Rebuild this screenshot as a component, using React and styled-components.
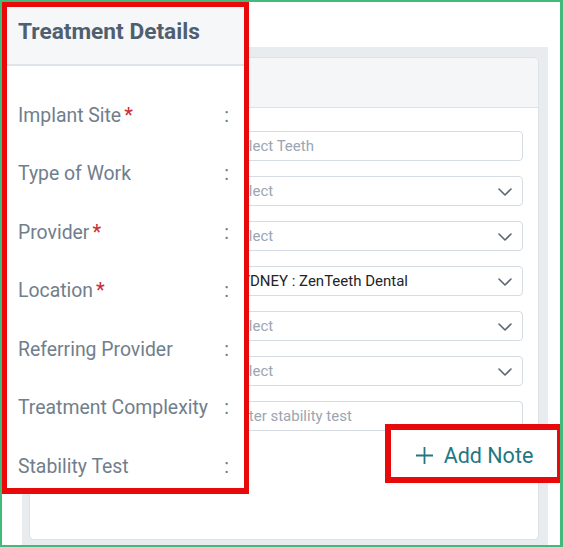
import React from 'react';
import styled, { createGlobalStyle } from 'styled-components';

const Global = createGlobalStyle`
  body {
    margin: 0;
    font-family: Roboto, "Liberation Sans", sans-serif;
    background: #fff;
  }
  * { box-sizing: border-box; }
`;

const Frame = styled.div`
  position: relative;
  width: 563px;
  height: 547px;
  border: 2px solid #44b97c;
  border-right-width: 3px;
  background: #fff;
  overflow: hidden;
  padding: 45px 12px 0 20px;
`;

const Shell = styled.div`
  height: 100%;
  background: #e9ecef;
  padding: 10px 9px 5px 7px;
  display: flex;
  flex-direction: column;
`;

const Card = styled.div`
  flex: 1;
  display: flex;
  flex-direction: column;
  background: #fff;
  border: 1px solid #dde2e7;
  border-radius: 5px;
  overflow: hidden;
`;

const CardHead = styled.div`
  height: 50px;
  background: #f5f6f8;
  border-bottom: 1px solid #dde2e7;
`;

const CardBody = styled.div`
  padding: 23px 15px 0 0;
  display: grid;
  grid-template-columns: 189px 1fr;
  row-gap: 15px;
`;

const Field = styled.div`
  grid-column: 2;
  position: relative;
  height: 30px;
  border: 1px solid #d6dce3;
  border-radius: 4px;
  display: flex;
  align-items: center;
  padding: 0 12px;
  font-size: 15px;
  color: ${p => (p.$placeholder ? '#9ba6b2' : '#212529')};
  white-space: nowrap;
`;

const Chevron = styled.svg`
  position: absolute;
  right: 10px;
  top: 11px;
`;

/* enlarged label panel laid over the form */
const ZoomPanel = styled.div`
  position: absolute;
  left: 0;
  top: 0;
  width: 247px;
  height: 492px;
  border: 5px solid #e80a0a;
  border-bottom-width: 6px;
  background: #fff;
`;

const PanelHead = styled.div`
  height: 59px;
  background: #f5f7f9;
  border-bottom: 2px solid #dfe4ea;
  padding: 11px 0 0 11px;
  font-size: 22.7px;
  line-height: 27px;
  font-weight: 700;
  color: #505f70;
`;

const PanelBody = styled.div`
  padding: 20px 15px 0 11px;
`;

const LabelRow = styled.div`
  height: 58.5px;
  display: flex;
  align-items: center;
  justify-content: space-between;
  font-size: 19.4px;
  color: #717e8c;
`;

const Req = styled.span`
  color: #c8343a;
  font-weight: 500;
  margin-left: 3px;
`;

const NoteBox = styled.div`
  position: absolute;
  left: 383px;
  top: 422px;
  width: 178px;
  height: 59px;
  border: 6px solid #e80a0a;
  background: #fff;
  display: flex;
  align-items: center;
  justify-content: center;
  gap: 10px;
  padding-top: 4px;
  font-size: 21.5px;
  color: #237782;
`;

const fields = [
  { key: 'site', value: 'Select Teeth', placeholder: true, select: false },
  { key: 'work', value: 'Select', placeholder: true, select: true },
  { key: 'provider', value: 'Select', placeholder: true, select: true },
  { key: 'location', value: 'SYDNEY : ZenTeeth Dental', placeholder: false, select: true },
  { key: 'referring', value: 'Select', placeholder: true, select: true },
  { key: 'complexity', value: 'Select', placeholder: true, select: true },
  { key: 'stability', value: 'Enter stability test', placeholder: true, select: false },
];

const labels = [
  { text: 'Implant Site', req: true },
  { text: 'Type of Work', req: false },
  { text: 'Provider', req: true },
  { text: 'Location', req: true },
  { text: 'Referring Provider', req: false },
  { text: 'Treatment Complexity', req: false },
  { text: 'Stability Test', req: false },
];

function ChevronIcon() {
  return (
    <Chevron width="14" height="8" viewBox="0 0 14 8">
      <path d="M1 1 L7 7 L13 1" fill="none" stroke="#5b6674" strokeWidth="1.6" strokeLinecap="round" strokeLinejoin="round" />
    </Chevron>
  );
}

export default function App() {
  return (
    <>
      <Global />
      <Frame>
        <Shell>
          <Card>
            <CardHead />
            <CardBody>
              {fields.map(f => (
                <Field key={f.key} $placeholder={f.placeholder}>
                  {f.value}
                  {f.select && <ChevronIcon />}
                </Field>
              ))}
            </CardBody>
          </Card>
        </Shell>

        <ZoomPanel>
          <PanelHead>Treatment Details</PanelHead>
          <PanelBody>
            {labels.map(l => (
              <LabelRow key={l.text}>
                <span>
                  {l.text}
                  {l.req && <Req>*</Req>}
                </span>
                <span>:</span>
              </LabelRow>
            ))}
          </PanelBody>
        </ZoomPanel>

        <NoteBox>
          <svg width="19" height="19" viewBox="0 0 19 19">
            <path d="M9.5 1 V18 M1 9.5 H18" stroke="#237782" strokeWidth="1.8" fill="none" />
          </svg>
          <span>Add Note</span>
        </NoteBox>
      </Frame>
    </>
  );
}
